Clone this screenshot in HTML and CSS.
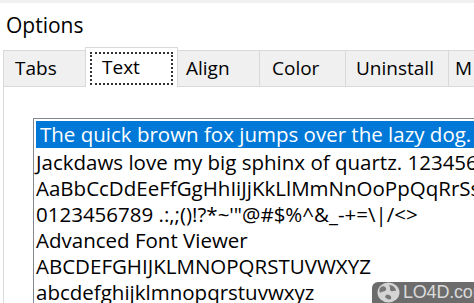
FILE: index.html
```html
<!DOCTYPE html>
<html lang="en">
<head>
    <meta charset="UTF-8">
    <meta name="viewport" content="width=device-width, initial-scale=1.0">
    <title>Options</title>
    <link rel="stylesheet" href="styles.css">
</head>
<body>
    <div class="topbar"></div>

    <!-- Options dialog -->
    <div class="dialog">
        <h1 class="title">Options</h1>

        <div class="tabs">
            <div class="tab tab-tabs">Tabs</div>
            <div class="tab tab-text active"><span class="focus">Text</span></div>
            <div class="tab tab-align">Align</div>
            <div class="tab tab-color">Color</div>
            <div class="tab tab-uninstall">Uninstall</div>
            <div class="tab tab-more">M</div>
        </div>

        <div class="panel">
            <div class="list">
                <div class="row first"><span class="selected">The quick brown fox jumps over the lazy dog.</span></div>
                <div class="row">Jackdaws love my big sphinx of quartz. 1234567890</div>
                <div class="row">AaBbCcDdEeFfGgHhIiJjKkLlMmNnOoPpQqRrSsTtUu</div>
                <div class="row">0123456789 .:,;()!?*~'"@#$%^&amp;_-+=\|/&lt;&gt;</div>
                <div class="row">Advanced Font Viewer</div>
                <div class="row">ABCDEFGHIJKLMNOPQRSTUVWXYZ</div>
                <div class="row">abcdefghijklmnopqrstuvwxyz</div>
            </div>
        </div>
    </div>

    <!-- watermark -->
    <div class="watermark">
        <svg class="globe" width="23" height="21" viewBox="0 0 23 21">
            <ellipse cx="11.5" cy="10.5" rx="11" ry="10" fill="#d4d4d4"/>
            <path d="M4 5 C7 3 10 6 9 8 C8 10 5 9 3 11 C2 8 2 7 4 5 Z" fill="#777"/>
            <path d="M12 3 C16 3 19 6 19 9 C17 8 16 10 14 9 C12 8 14 6 12 3 Z" fill="#777"/>
            <path d="M9 13 C12 12 15 14 14 17 C12 18 10 17 8 15 Z" fill="#777"/>
        </svg>
        <span>LO4D.com</span>
    </div>
</body>
</html>
```

FILE: styles.css
```css
body {
    font-family: "Open Sans", "Noto Sans", sans-serif;
    margin: 0;
    padding: 0;
    background: #fff;
    color: #000;
    height: 303px;
    overflow: hidden;
}

.topbar {
    height: 3px;
    background: #f0f0f0;
}

.dialog {
    height: 300px;
    overflow: hidden;
}

.title {
    font-size: 21px;
    font-weight: normal;
    margin: 0;
    padding: 8px 0 0 6px;
    height: 36px;
    line-height: 28px;
}

.tabs {
    display: flex;
    align-items: flex-end;
    margin-left: 3px;
    height: 40px;
    margin-bottom: -1px;
    white-space: nowrap;
    position: relative;
    z-index: 1;
}

.tab {
    box-sizing: border-box;
    height: 37px;
    background: #f0f0f0;
    border: 1px solid #d9d9d9;
    border-left: none;
    font-size: 19px;
    line-height: 34px;
    padding-left: 11px;
    flex-shrink: 0;
}

.tab-tabs {
    width: 83px;
    border-left: 1px solid #d9d9d9;
}

.tab.active {
    height: 40px;
    background: #fff;
    border-left: 1px solid #d9d9d9;
    border-bottom: none;
    width: 93px;
    margin-left: -1px;
    padding: 4px 4px 0 4px;
    line-height: 30px;
}

.focus {
    display: block;
    box-sizing: border-box;
    border: 2px dotted #333;
    height: 33px;
    padding-left: 10px;
    line-height: 27px;
}

.tab-align {
    width: 82px;
    padding-left: 8px;
}

.tab-color {
    width: 86px;
    padding-left: 12px;
}

.tab-uninstall {
    width: 103px;
    padding-left: 10px;
}

.tab-more {
    width: 60px;
    padding-left: 6px;
}

.panel {
    margin-left: 3px;
    border-top: 1px solid #d9d9d9;
    border-left: 1px solid #d9d9d9;
    padding: 31px 0 0 29px;
    height: 220px;
}

.list {
    border: 1px solid #828790;
    border-right: none;
    padding: 2px 0 0 2px;
    font-size: 20.5px;
    line-height: 27px;
    white-space: nowrap;
}

.row {
    height: 26px;
}

.row.first {
    height: 28px;
}

.selected {
    display: inline-block;
    background: #0078d7;
    color: #fff;
    height: 27px;
    padding: 0 3px 0 4px;
}

.watermark {
    position: absolute;
    right: 0;
    bottom: 0;
    box-sizing: border-box;
    width: 102px;
    height: 21px;
    background: #6c6c6c;
    border-top-left-radius: 6px;
    display: flex;
    align-items: center;
    padding-left: 5px;
    gap: 3px;
    color: #dadada;
    font-family: "Liberation Sans", sans-serif;
    font-size: 18px;
    letter-spacing: -0.2px;
    white-space: nowrap;
}

.globe {
    flex-shrink: 0;
}
```
